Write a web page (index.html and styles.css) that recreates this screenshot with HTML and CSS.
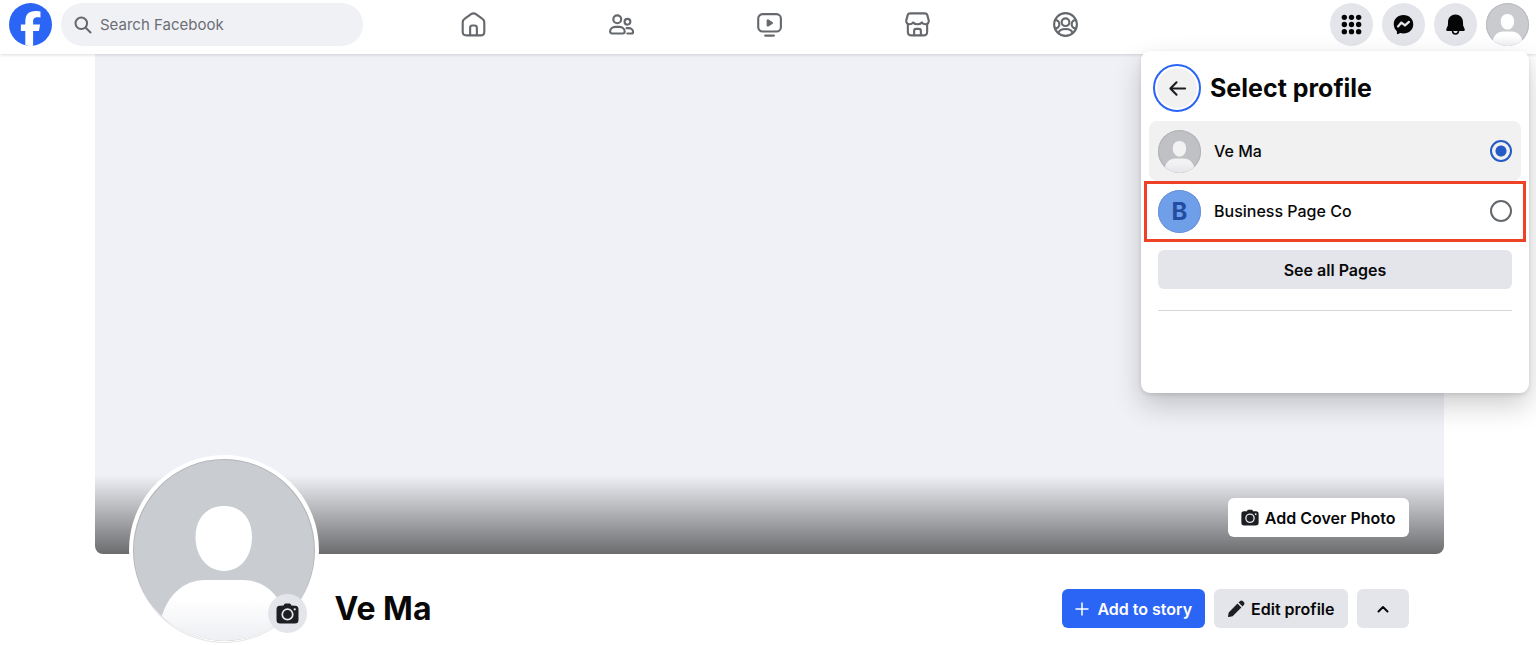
FILE: index.html
```html
<!DOCTYPE html>
<html lang="en">
<head>
<meta charset="utf-8">
<meta name="viewport" content="width=device-width, initial-scale=1">
<title>Ve Ma | Facebook</title>
<link rel="stylesheet" href="styles.css">
</head>
<body>
<svg class="sprite" aria-hidden="true">
  <defs>
    <linearGradient id="torso" x1="0" y1="0" x2="0" y2="1">
      <stop offset="0.3" stop-color="#fff"/>
      <stop offset="1" stop-color="#eeeff3"/>
    </linearGradient>
    <clipPath id="round"><circle cx="91" cy="91" r="91"/></clipPath>
  </defs>
  <symbol id="person" viewBox="0 0 182 182">
    <g clip-path="url(#round)">
      <path class="person-head" d="M91 47C109 47 119 60 119 78C119 98 107 112 91 112C75 112 62.500 98 62.500 78C62.500 60 73 47 91 47Z"/>
      <path class="person-body" fill="url(#torso)" d="M28 160C34 137 50 121 72 121H110C132 121 148 137 154 160V182H28Z"/>
    </g>
  </symbol>
  <symbol id="camera" viewBox="0 0 24 22">
    <path fill="#1c1e21" d="M8 2.500C8.500 1 9 .5 10.500 .5H13.500C15 .5 15.500 1 16 2.500L20 2.800C22.500 3 23.500 4 23.500 6.500V17.500C23.500 20.500 22.500 21.500 19.500 21.500H4.500C1.500 21.500 .5 20.500 .5 17.500V6.500C.5 4 1.500 3 4 2.800Z"/>
    <circle cx="12" cy="12" r="5.500" fill="none" stroke="#e4e6eb" stroke-width="1.800"/>
    <circle cx="19.600" cy="6.600" r="1.200" fill="#e4e6eb"/>
  </symbol>
</svg>

<header class="topbar">
  <div class="topbar-start">
    <a class="logo" href="#" aria-label="Facebook">
      <svg viewBox="0 0 36 36"><circle cx="18" cy="18" r="18" fill="#2b65f6"/><path fill="#fff" d="M13.651 35.471v-11.97H9.936V18h3.715v-2.370c0-6.127 2.772-8.964 8.784-8.964 1.138 0 3.103.223 3.910.446v4.983c-.425-.043-1.167-.065-2.081-.065-2.952 0-4.090 1.116-4.090 4.025V18h5.883l-1.008 5.500h-4.867v12.370a18.183 18.183 0 0 1-6.530-.399Z"/></svg>
    </a>
    <label class="search">
      <svg viewBox="0 0 18 18" aria-hidden="true"><circle cx="7.300" cy="7.300" r="5.800"/><path d="M11.700 11.700L16.500 16.500"/></svg>
      <input type="search" placeholder="Search Facebook" aria-label="Search Facebook">
    </label>
  </div>
  <nav class="tabs" aria-label="Main">
    <a href="#" aria-label="Home"><svg viewBox="0 0 28 28"><path d="M2.800 11.800C2.800 10 3.500 9 5 8L11.500 3.300C13.300 2 14.700 2 16.500 3.300L23 8C24.500 9 25.200 10 25.200 11.800V21.500C25.200 24.300 24 25.300 21.500 25.300H6.500C4 25.300 2.800 24.300 2.800 21.500Z"/><path d="M10.500 25V17.500C10.500 15.800 11.200 15 12.800 15H15.200C16.800 15 17.500 15.800 17.500 17.500V25"/></svg></a>
    <a href="#" aria-label="Friends"><svg viewBox="0 0 28 28"><circle cx="9.600" cy="8.600" r="4.100"/><circle cx="20.200" cy="11.200" r="3"/><path d="M7.500 16.500H12C15 16.500 17.300 18.500 17.300 21.300C17.300 22.700 16.500 23.300 15.300 23.300H4.200C3 23.300 2.200 22.700 2.200 21.300C2.200 18.500 4.500 16.500 7.500 16.500Z"/><path d="M19.300 17.800H21.500C24 17.800 26 19.500 26 21.700C26 22.900 25.300 23.300 24.300 23.300H20"/></svg></a>
    <a href="#" aria-label="Video"><svg viewBox="0 0 28 28"><rect x="2.300" y="3.300" width="23.500" height="18" rx="4.500"/><path d="M9.500 25.500H18.500"/><path class="solid" d="M11.500 9.700C11.500 9.100 12 8.800 12.500 9.100L17 11.900C17.500 12.200 17.500 12.700 17 13L12.500 15.700C12 16 11.500 15.700 11.500 15.100Z"/></svg></a>
    <a href="#" aria-label="Marketplace"><svg viewBox="0 0 28 28"><path d="M6.500 2.500H21.500C23 2.500 24 3.300 24.300 4.800L25.700 10C25.900 12 24.500 13.800 22.300 13.800C20.500 13.800 19.300 13 18.600 11.900C17.600 13.100 16 13.800 14 13.800C12 13.800 10.400 13.100 9.400 11.900C8.700 13 7.500 13.800 5.700 13.800C3.500 13.800 2.100 12 2.300 10L3.700 4.800C4 3.300 5 2.500 6.500 2.500Z"/><path d="M4 13.500V21.500C4 24.300 5 25.300 7.800 25.300H20.200C23 25.300 24 24.300 24 21.500V13.500"/><path d="M10.500 25V20.500C10.500 19.200 11.200 18.500 12.500 18.500H15.500C16.800 18.500 17.500 19.200 17.500 20.500V25"/></svg></a>
    <a href="#" aria-label="Groups"><svg viewBox="0 0 28 28"><circle cx="14" cy="14" r="11.800"/><circle cx="14" cy="11.600" r="4"/><path d="M3.500 9.700C6 9.300 7.600 11.300 7.600 13.800S6 18.300 3.300 18"/><path d="M24.500 9.700C22 9.300 20.400 11.300 20.400 13.800S22 18.300 24.700 18"/><path d="M6.800 23C7.300 20.300 9.800 18.700 14 18.700S20.700 20.300 21.200 23"/></svg></a>
  </nav>
  <div class="topbar-end">
    <button class="round" aria-label="Menu"><svg viewBox="0 0 22 22"><g fill="#050505"><circle cx="3.500" cy="3.500" r="2.800"/><circle cx="11" cy="3.500" r="2.800"/><circle cx="18.500" cy="3.500" r="2.800"/><circle cx="3.500" cy="11" r="2.800"/><circle cx="11" cy="11" r="2.800"/><circle cx="18.500" cy="11" r="2.800"/><circle cx="3.500" cy="18.500" r="2.800"/><circle cx="11" cy="18.500" r="2.800"/><circle cx="18.500" cy="18.500" r="2.800"/></g></svg></button>
    <button class="round" aria-label="Messenger"><svg viewBox="0 0 22 22"><path fill="#050505" d="M11 1C17 1 21.200 5.200 21.200 10.700S17 20.400 11 20.400C9.700 20.400 8.500 20.200 7.400 19.900L5.500 21C4.800 21.300 4.100 20.900 4.100 20.100V18C2.100 16.300 .8 13.800 .8 10.700C.8 5.200 5 1 11 1Z"/><path fill="none" stroke="#e4e6eb" stroke-width="2.400" stroke-linejoin="round" stroke-linecap="round" d="M5.300 13L8.800 9L12.600 12L16.700 8.300"/></svg></button>
    <button class="round" aria-label="Notifications"><svg viewBox="0 0 22 22"><path fill="#050505" d="M11 .5C15.300 .5 18.600 3.600 18.800 7.800L19 12L20.600 15.700C21.100 17 20.500 17.800 19.300 17.800H2.700C1.500 17.800 .9 17 1.400 15.700L3 12L3.200 7.800C3.400 3.600 6.700 .5 11 .5Z"/><path fill="none" stroke="#050505" stroke-width="1.600" d="M7.800 17.500C8 22 14 22 14.200 17.500"/></svg></button>
    <button class="avatar" aria-label="Your profile"><svg><use href="#person"/></svg></button>
  </div>

  <section class="menu" aria-label="Select profile">
    <div class="menu-head">
      <button class="back" aria-label="Back"><svg viewBox="0 0 20 20"><path d="M18 10H3M9 3.500L2.500 10L9 16.500"/></svg></button>
      <h2>Select profile</h2>
    </div>
    <label class="choice current">
      <span class="avatar"><svg><use href="#person"/></svg></span>
      <span class="choice-name">Ve Ma</span>
      <input type="radio" name="profile" checked>
    </label>
    <label class="choice marked">
      <span class="avatar letter">B</span>
      <span class="choice-name">Business Page Co</span>
      <input type="radio" name="profile">
    </label>
    <div class="menu-foot">
      <button class="btn wide">See all Pages</button>
      <hr>
    </div>
  </section>
</header>

<main class="page">
  <div class="cover">
    <button class="btn white"><svg class="icon-camera"><use href="#camera"/></svg>Add Cover Photo</button>
  </div>
  <div class="profile">
    <div class="portrait">
      <svg class="portrait-image" role="img" aria-label="Ve Ma"><use href="#person"/></svg>
      <button class="portrait-edit" aria-label="Update profile picture"><svg><use href="#camera"/></svg></button>
    </div>
    <div class="profile-info">
      <h1>Ve Ma</h1>
      <div class="actions">
        <button class="btn blue"><svg class="icon-plus" viewBox="0 0 14 14"><path d="M7 1V13M1 7H13"/></svg>Add to story</button>
        <button class="btn"><svg class="icon-pen" viewBox="0 0 18 18"><path fill="#1c1e21" d="M1 16.200L1.700 12.400L10.500 3.600L14.400 7.500L5.600 16.300L1.800 17C1.200 17.100 .9 16.800 1 16.200ZM11.600 2.500L12.900 1.200C13.900 .3 15 .3 15.900 1.200L16.800 2.100C17.700 3 17.700 4.100 16.800 5.100L15.500 6.400Z"/></svg>Edit profile</button>
        <button class="btn more" aria-label="See more"><svg class="icon-up" viewBox="0 0 14 14"><path d="M2.500 9.500L7 5L11.500 9.500"/></svg></button>
      </div>
    </div>
  </div>
</main>
</body>
</html>
```

FILE: styles.css
```css
* {
  box-sizing: border-box;
}

body {
  margin: 0;
  background: #fff;
  color: #080809;
  font-family: Inter, "Liberation Sans", sans-serif;
  font-size: 16px;
  overflow-x: hidden;
}

button,
input {
  font: inherit;
  color: inherit;
  margin: 0;
}

button {
  border: 0;
  padding: 0;
  cursor: pointer;
}

svg {
  display: block;
}

.sprite {
  position: absolute;
  width: 0;
  height: 0;
}

.person-head {
  fill: #fff;
}

/* Top bar */

.topbar {
  position: relative;
  z-index: 2;
  display: grid;
  grid-template-columns: 1fr auto 1fr;
  align-items: start;
  height: 54px;
  padding: 3px 7px 0 9px;
  background: #fff;
  box-shadow: 0 1px 3px rgba(0, 0, 0, 0.14);
}

.topbar-start,
.topbar-end {
  display: flex;
  gap: 9px;
}

.topbar-end {
  justify-content: flex-end;
}

.logo,
.logo svg {
  display: block;
  width: 43px;
  height: 43px;
}

.search {
  display: flex;
  align-items: center;
  gap: 8px;
  width: 302px;
  height: 43px;
  padding: 0 13px;
  border-radius: 22px;
  background: #f0f1f5;
}

.search svg {
  flex: none;
  width: 18px;
  height: 18px;
  fill: none;
  stroke: #65686c;
  stroke-width: 2;
  stroke-linecap: round;
}

.search input {
  flex: 1;
  min-width: 0;
  border: 0;
  padding: 0;
  outline: 0;
  background: none;
  font-size: 15px;
}

.search input::placeholder {
  color: #6b6e73;
  opacity: 1;
}

.tabs {
  display: flex;
}

.tabs a {
  display: grid;
  place-items: center;
  width: 148px;
  height: 42px;
}

.tabs svg {
  width: 27px;
  height: 27px;
  fill: none;
  stroke: #65686c;
  stroke-width: 2.2;
  stroke-linecap: round;
  stroke-linejoin: round;
}

.tabs .solid {
  fill: #65686c;
  stroke-width: 1;
}

.round {
  display: grid;
  place-items: center;
  width: 43px;
  height: 43px;
  border-radius: 50%;
  background: #e4e5eb;
}

.round svg {
  width: 21px;
  height: 21px;
}

.avatar {
  flex: none;
  width: 43px;
  height: 43px;
  border-radius: 50%;
  background: #c9cbcf;
  box-shadow: inset 0 0 0 1px #b9bbbf;
}

.avatar svg {
  width: 43px;
  height: 43px;
}

/* Profile menu */

.menu {
  position: absolute;
  top: 51px;
  right: 7px;
  width: 388px;
  min-height: 342px;
  padding: 13px 8px 8px;
  border-radius: 9px;
  background: #fff;
  box-shadow: 0 12px 28px rgba(0, 0, 0, 0.2), 0 2px 4px rgba(0, 0, 0, 0.1);
}

.menu-head {
  display: flex;
  align-items: center;
  gap: 9px;
  padding: 0 4px 9px;
}

.menu-head h2 {
  margin: 0;
  font-size: 25px;
  line-height: 30px;
  font-weight: 700;
}

.back {
  display: grid;
  place-items: center;
  width: 48px;
  height: 48px;
  border: 2px solid #2b65f6;
  border-radius: 50%;
  background: #f1f1f1;
  box-shadow: inset 0 0 0 2px #fff;
}

.back svg {
  width: 19px;
  height: 19px;
  fill: none;
  stroke: #1c1e21;
  stroke-width: 2.2;
  stroke-linecap: round;
  stroke-linejoin: round;
}

.choice {
  position: relative;
  display: flex;
  align-items: center;
  gap: 13px;
  height: 60px;
  padding: 0 9px;
  border-radius: 8px;
}

.choice-name {
  flex: 1;
  font-weight: 500;
}

.current {
  background: #f1f1f1;
}

.current .avatar {
  background: #c0c1c5;
  box-shadow: inset 0 0 0 1px #b2b3b6;
}

.current .avatar svg {
  opacity: 0.8;
}

.letter {
  display: grid;
  place-items: center;
  background: #709fea;
  box-shadow: inset 0 0 0 1px #6893da;
  color: #234da0;
  font-size: 24px;
  font-weight: 700;
}

.choice input {
  appearance: none;
  width: 22px;
  height: 22px;
  border: 2px solid #65686c;
  border-radius: 50%;
}

.choice input:checked {
  border-color: #245bc5;
  background: radial-gradient(circle, #245bc5 5px, transparent 6px);
}

.marked::after {
  content: "";
  position: absolute;
  inset: 0 -5px -1px;
  border: 3px solid #ee4226;
  pointer-events: none;
}

.menu-foot {
  padding: 9px 9px 0 9px;
}

.menu-foot hr {
  height: 1px;
  margin: 21px 0 0;
  border: 0;
  background: #d5d7dc;
}

/* Buttons */

.btn {
  display: flex;
  align-items: center;
  justify-content: center;
  gap: 6px;
  height: 39px;
  padding: 0 13px;
  border-radius: 6px;
  background: #e4e5eb;
  font-weight: 600;
  white-space: nowrap;
}

.wide {
  width: 100%;
}

.white {
  background: #fff;
}

.blue {
  gap: 8px;
  background: #2b65f6;
  color: #fff;
}

.more {
  width: 52px;
}

.icon-camera {
  width: 18px;
  height: 17px;
}

.icon-plus,
.icon-up {
  width: 14px;
  height: 14px;
  fill: none;
  stroke: currentColor;
  stroke-width: 2;
  stroke-linecap: round;
  stroke-linejoin: round;
}

.icon-plus {
  stroke-width: 1.5;
}

.icon-pen {
  width: 18px;
  height: 18px;
}

/* Profile page */

.page {
  width: 100%;
  max-width: 1351px;
  margin: 0 auto;
  padding-left: 2px;
}

.cover {
  display: flex;
  align-items: flex-end;
  justify-content: flex-end;
  height: 500px;
  padding: 17px 35px;
  border-radius: 0 0 8px 8px;
  background: linear-gradient(to top, #6b6c6e, rgba(107, 108, 110, 0) 79px), #f0f1f6;
}

.profile {
  display: flex;
  gap: 16px;
  padding: 0 35px 0 34px;
}

.portrait {
  position: relative;
  flex: none;
  height: 91px;
}

.portrait-image {
  width: 190px;
  height: 190px;
  margin-top: -99px;
  border: 4px solid #fff;
  border-radius: 50%;
  background: #c9ccd1;
}

.portrait::after {
  content: "";
  position: absolute;
  inset: -95px 4px auto;
  height: 182px;
  border: 1px solid rgba(0, 0, 0, 0.1);
  border-radius: 50%;
}

.portrait-edit {
  position: absolute;
  z-index: 1;
  right: 12px;
  bottom: 12px;
  display: grid;
  place-items: center;
  width: 39px;
  height: 39px;
  border-radius: 50%;
  background: #e4e5eb;
}

.portrait-edit svg {
  width: 23px;
  height: 21px;
}

.profile-info {
  flex: 1;
  display: flex;
  align-items: center;
  justify-content: space-between;
  height: 39px;
  margin-top: 35px;
}

.profile-info h1 {
  margin: 0;
  font-size: 32px;
  line-height: 40px;
  font-weight: 700;
}

.actions {
  display: flex;
  gap: 9px;
}
```
